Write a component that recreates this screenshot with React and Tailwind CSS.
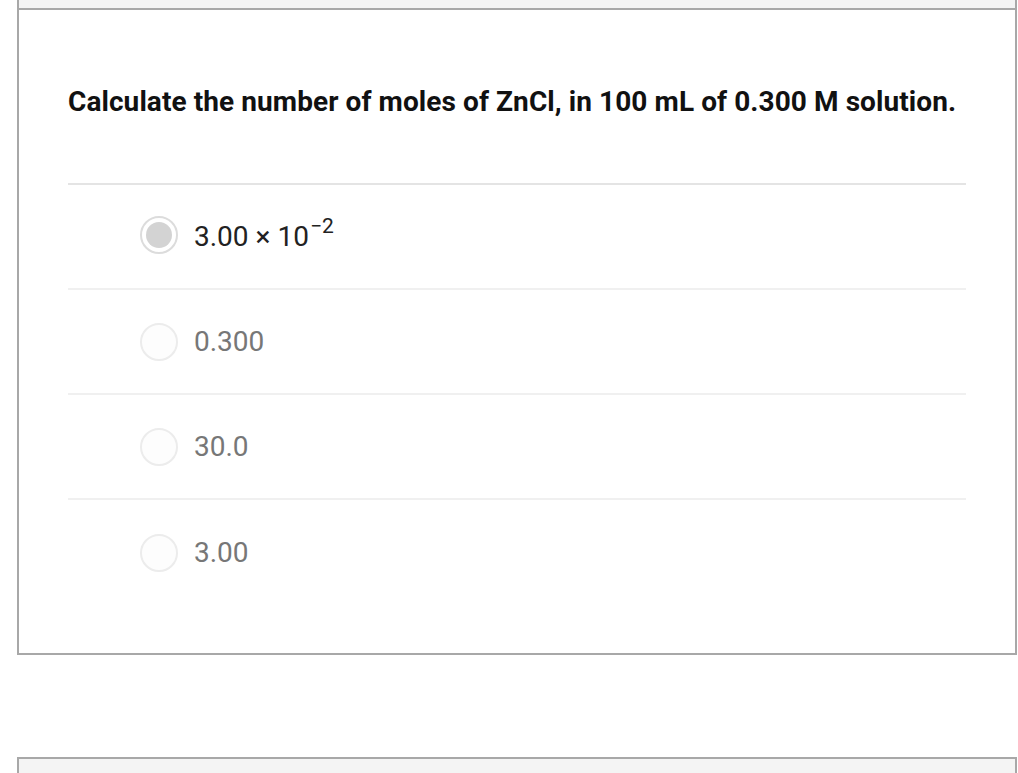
import React, { useState } from 'react';

const options = [
  { id: 'a', label: <>3.00 × 10<sup className="relative -top-[13px] ml-[1px] text-[21px]">−2</sup></> },
  { id: 'b', label: '0.300' },
  { id: 'c', label: '30.0' },
  { id: 'd', label: '3.00' },
];

const App = () => {
  const [selected, setSelected] = useState('a');

  return (
    <div className="w-[1018px] h-[773px] overflow-hidden bg-white font-['Roboto',sans-serif]">
      {/* Previous question card (only its bottom edge shows) */}
      <div className="ml-[17px] w-[1000px] h-[10px] bg-[#f4f4f4] border-x-2 border-b-2 border-[#a8a8a8]" />

      {/* Question card */}
      <div className="ml-[17px] w-[1000px] h-[645px] border-x-2 border-b-2 border-[#a8a8a8] bg-white px-[49px]">
        <h2 className="pt-[75px] text-[28px] font-bold text-[#111] leading-[34px] tracking-[0.08px]">
          Calculate the number of moles of ZnCl, in 100 mL of 0.300 M solution.
        </h2>

        <div className="mt-[64px] border-t-2 border-[#e4e4e4]">
          {options.map((opt, i) => {
            const isOn = selected === opt.id;
            return (
              <button
                key={opt.id}
                onClick={() => setSelected(opt.id)}
                className={`w-full flex items-center h-[105px] pl-[72px] text-left ${i < options.length - 1 ? 'border-b-2 border-[#f0f0f0]' : ''}`}
              >
                {isOn ? (
                  <span className="-mt-[4px] w-[38px] h-[38px] rounded-full border-2 border-[#dcdcdc] bg-white flex items-center justify-center">
                    <span className="w-[26px] h-[26px] rounded-full bg-[#d3d3d3]" />
                  </span>
                ) : (
                  <span className="w-[38px] h-[38px] rounded-full border-2 border-[#ececec] bg-[#fdfdfd]" />
                )}
                <span className={`ml-[16px] text-[28px] ${isOn ? 'text-[#222]' : 'text-[#777]'}`}>
                  {opt.label}
                </span>
              </button>
            );
          })}
        </div>
      </div>

      {/* Next question card (top edge) */}
      <div className="mt-[102px] ml-[17px] w-[1000px] h-[40px] bg-[#f4f4f4] border-x-2 border-t-2 border-[#a8a8a8]" />
    </div>
  );
};

export default App;
